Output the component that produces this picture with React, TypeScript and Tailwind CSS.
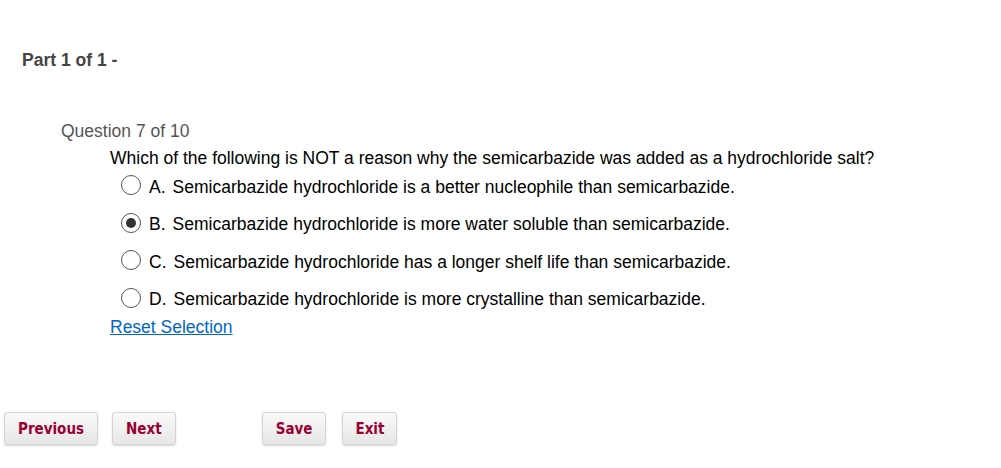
import React, { useState } from "react";

const options = [
  { key: "A", text: "Semicarbazide hydrochloride is a better nucleophile than semicarbazide." },
  { key: "B", text: "Semicarbazide hydrochloride is more water soluble than semicarbazide." },
  { key: "C", text: "Semicarbazide hydrochloride has a longer shelf life than semicarbazide." },
  { key: "D", text: "Semicarbazide hydrochloride is more crystalline than semicarbazide." },
];

function Radio({ checked }: { checked: boolean }) {
  return (
    <span className="flex h-[20px] w-[20px] shrink-0 items-center justify-center rounded-full border border-[#555] bg-white">
      {checked ? <span className="h-[10px] w-[10px] rounded-full bg-[#333]" /> : null}
    </span>
  );
}

function NavButton({ label, className = "" }: { label: string; className?: string }) {
  return (
    <button
      type="button"
      className={`h-[33px] rounded-[3px] border border-[#d4d4d4] bg-gradient-to-b from-[#fafafa] to-[#e6e6e6] text-[15px] font-bold text-[#9b0033] shadow-[0_1px_2px_rgba(0,0,0,0.15)] ${className}`}
      style={{ fontFamily: "Tahoma, 'DejaVu Sans Condensed', 'DejaVu Sans', sans-serif" }}
    >
      {label}
    </button>
  );
}

export default function App() {
  const [selected, setSelected] = useState("B");

  return (
    <div
      className="h-[468px] w-[1001px] bg-white text-[17.5px] leading-[20px]"
      style={{ fontFamily: "'Liberation Sans', Arial, sans-serif" }}
    >
      <div className="h-[70px] pl-[22px] pt-[50px] font-bold text-[#444]">Part 1 of 1 -</div>

      <div className="pl-[61px] pt-[51px]">
        <div className="h-[20px] text-[#555]">Question 7 of 10</div>
        <div className="pl-[49px]">
          <div className="mt-[7px] h-[20px] text-black">
            Which of the following is NOT a reason why the semicarbazide was added as a hydrochloride salt?
          </div>
          <div className="mt-[7px] flex flex-col gap-[17.5px] pl-[11px]">
            {options.map((o) => (
              <label
                key={o.key}
                className="flex h-[20px] cursor-pointer items-center gap-[8px] text-black"
                onClick={() => setSelected(o.key)}
              >
                <Radio checked={selected === o.key} />
                <span className="pt-[3px]">
                  <span className="mr-[7px]">{o.key}.</span>
                  {o.text}
                </span>
              </label>
            ))}
          </div>
          <a
            href="#"
            className="mt-[9.5px] block h-[20px] w-fit text-[#0066cc] underline"
            onClick={(e) => {
              e.preventDefault();
              setSelected("");
            }}
          >
            Reset Selection
          </a>
        </div>
      </div>

      <div className="mt-[75px] flex items-center pl-[4px]">
        <NavButton label="Previous" className="px-[13px]" />
        <NavButton label="Next" className="ml-[14px] px-[13px]" />
        <NavButton label="Save" className="ml-[86px] px-[13px]" />
        <NavButton label="Exit" className="ml-[16px] px-[12px]" />
      </div>
    </div>
  );
}
